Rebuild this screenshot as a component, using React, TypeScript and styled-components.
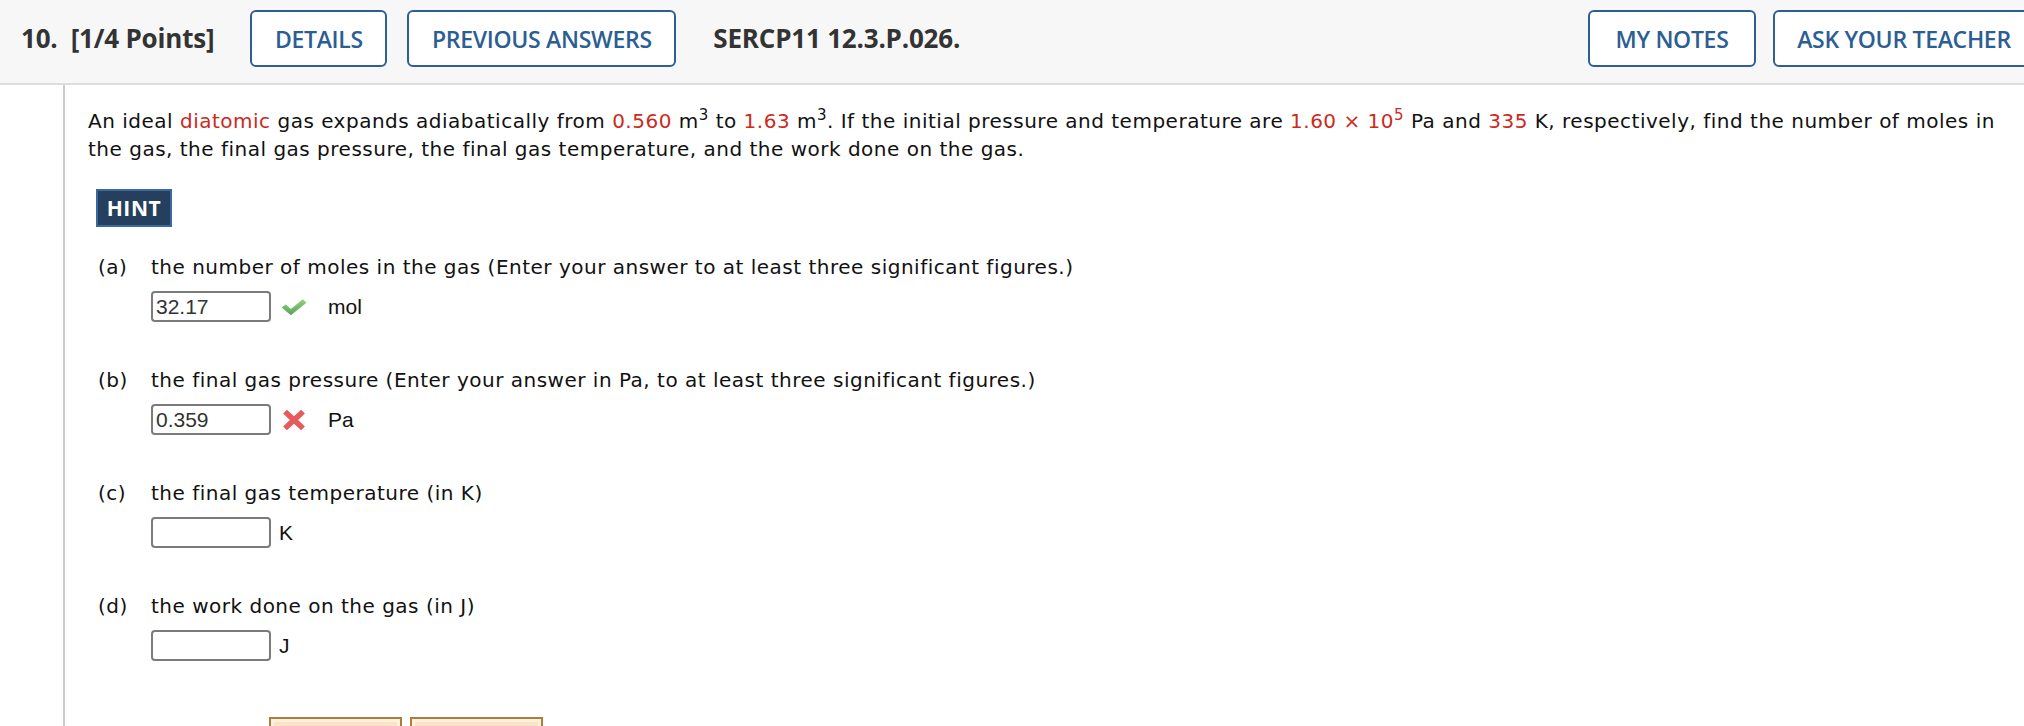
import React from 'react'
import styled, { createGlobalStyle } from 'styled-components'

const GlobalStyle = createGlobalStyle`
  html, body {
    margin: 0;
    padding: 0;
    background: #fff;
    overflow: hidden;
  }
  body {
    width: 2024px;
    height: 726px;
  }
`

const Page = styled.div`
  width: 2024px;
  height: 726px;
  overflow: hidden;
  display: flex;
  flex-direction: column;
`

const Header = styled.div`
  height: 85px;
  flex-shrink: 0;
  background: #f7f7f7;
  border-bottom: 2px solid #dedede;
  display: flex;
  align-items: flex-start;
  padding: 10px 0 0 21px;
  box-sizing: border-box;
  white-space: nowrap;
`

const Title = styled.div<{ ml?: number; mr?: number }>`
  font-family: 'Open Sans', sans-serif;
  font-weight: 700;
  font-size: 26px;
  color: #333;
  height: 57px;
  line-height: 57px;
  margin-left: ${(p) => p.ml ?? 0}px;
  margin-right: ${(p) => p.mr ?? 0}px;
  letter-spacing: -0.2px;
`

const HeaderButton = styled.button<{ w: number; ml?: number; mr?: number }>`
  flex-shrink: 0;
  width: ${(p) => p.w}px;
  height: 57px;
  margin-left: ${(p) => p.ml ?? 0}px;
  margin-right: ${(p) => p.mr ?? 0}px;
  border: 2px solid #2d5f93;
  border-radius: 6px;
  background: #fff;
  color: #2b5e92;
  font-family: 'Open Sans', sans-serif;
  font-weight: 600;
  font-size: 23px;
  letter-spacing: -0.3px;
  padding: 0;
  cursor: pointer;
`

const Spacer = styled.div`
  flex: 1;
`

const Body = styled.div`
  flex: 1;
  margin-left: 63px;
  border-left: 2px solid #cccccc;
  padding: 22px 0 0 23px;
  font-family: 'DejaVu Sans', Verdana, sans-serif;
  color: #111;
`

const Question = styled.p`
  margin: 0;
  font-size: 20px;
  line-height: 28px;
  width: 1925px;
  letter-spacing: 0.5px;
`

const Red = styled.span`
  color: #cc2a20;
`

const Sup = styled.sup`
  font-size: 15px;
  line-height: 0;
  vertical-align: 8px;
`

const HintButton = styled.button`
  display: block;
  margin: 26px 0 0 8px;
  width: 76px;
  height: 38px;
  padding: 0;
  background: #253f5e;
  border: 2px solid #3a68a0;
  color: #fff;
  font-family: 'Open Sans', sans-serif;
  font-weight: 700;
  font-size: 21px;
  letter-spacing: 0.6px;
`

const Part = styled.div<{ first?: boolean }>`
  margin-top: ${(p) => (p.first ? 26 : 44)}px;
  padding-left: 10px;
`

const PartLabel = styled.div`
  display: flex;
  font-size: 20px;
  line-height: 28px;
  letter-spacing: 0.5px;
  white-space: nowrap;
`

const Letter = styled.span`
  width: 53px;
  flex-shrink: 0;
`

const AnswerRow = styled.div`
  display: flex;
  align-items: center;
  margin: 10px 0 0 53px;
  height: 31px;
`

const AnswerBox = styled.div`
  width: 120px;
  height: 31px;
  box-sizing: border-box;
  border: 2px solid #7b7b7b;
  border-radius: 4px;
  background: #fff;
  font-family: 'Liberation Sans', Arial, sans-serif;
  font-size: 21px;
  color: #333;
  line-height: 27px;
  padding-left: 3px;
`

const Mark = styled.span`
  display: flex;
  width: 28px;
  margin-left: 9px;
  justify-content: center;
`

const Unit = styled.span<{ ml: number }>`
  margin-left: ${(p) => p.ml}px;
  font-family: 'Liberation Sans', Arial, sans-serif;
  font-size: 21px;
  color: #111;
`

const Footer = styled.div`
  display: flex;
  align-items: flex-start;
  margin-top: 56px;
  padding-left: 12px;
`

const HelpText = styled.span`
  width: 169px;
  margin-top: 6px;
  color: #f0b070;
  font-size: 18px;
  font-weight: 700;
  opacity: 0.7;
`

const SubmitButton = styled.button`
  width: 133px;
  height: 36px;
  margin-right: 8px;
  padding: 0;
  background: #fde3c6;
  border: 2px solid #b07c3e;
  box-shadow: inset 0 0 0 3px #fff1e0;
`

const Check = () => (
  <svg width="28" height="21" viewBox="0 0 27 20">
    <defs>
      <linearGradient id="ck" x1="0" y1="0" x2="0" y2="1">
        <stop offset="0" stopColor="#95d184" />
        <stop offset="1" stopColor="#58a356" />
      </linearGradient>
    </defs>
    <path d="M1.5 11 L5.5 8 L10.5 12.5 L22 3 L25.5 6.5 L10.5 18.5 Z" fill="url(#ck)" />
  </svg>
)

const Cross = () => (
  <svg width="24" height="24" viewBox="0 0 22 22">
    <path
      d="M4.5 1.5 L11 7.5 L17.5 1.5 L21 5 L14.8 11 L21 17 L17.5 20.5 L11 14.5 L4.5 20.5 L1 17 L7.2 11 L1 5 Z"
      fill="#e65c5c"
    />
  </svg>
)

const parts = [
  {
    letter: '(a)',
    text: 'the number of moles in the gas (Enter your answer to at least three significant figures.)',
    value: '32.17',
    mark: 'ok',
    unit: 'mol',
  },
  {
    letter: '(b)',
    text: 'the final gas pressure (Enter your answer in Pa, to at least three significant figures.)',
    value: '0.359',
    mark: 'bad',
    unit: 'Pa',
  },
  { letter: '(c)', text: 'the final gas temperature (in K)', value: '', mark: '', unit: 'K' },
  { letter: '(d)', text: 'the work done on the gas (in J)', value: '', mark: '', unit: 'J' },
]

export default function App() {
  return (
    <>
      <GlobalStyle />
      <Page>
        <Header>
          <Title mr={36}>10.&nbsp; [1/4 Points]</Title>
          <HeaderButton w={137}>DETAILS</HeaderButton>
          <HeaderButton w={269} ml={20}>PREVIOUS ANSWERS</HeaderButton>
          <Title ml={37}>SERCP11 12.3.P.026.</Title>
          <Spacer />
          <HeaderButton w={168}>MY NOTES</HeaderButton>
          <HeaderButton w={262} ml={17} mr={-11}>ASK YOUR TEACHER</HeaderButton>
        </Header>
        <Body>
          <Question>
            An ideal <Red>diatomic</Red> gas expands adiabatically from <Red>0.560</Red> m<Sup>3</Sup> to{' '}
            <Red>1.63</Red> m<Sup>3</Sup>. If the initial pressure and temperature are{' '}
            <Red>
              1.60 × 10<Sup>5</Sup>
            </Red>{' '}
            Pa and <Red>335</Red> K, respectively, find the number of moles in the gas, the final gas pressure, the
            final gas temperature, and the work done on the gas.
          </Question>
          <HintButton>HINT</HintButton>
          {parts.map((p, i) => (
            <Part key={p.letter} first={i === 0}>
              <PartLabel>
                <Letter>{p.letter}</Letter>
                <span>{p.text}</span>
              </PartLabel>
              <AnswerRow>
                <AnswerBox>{p.value}</AnswerBox>
                {p.mark && <Mark>{p.mark === 'ok' ? <Check /> : <Cross />}</Mark>}
                <Unit ml={p.mark ? 20 : 8}>{p.unit}</Unit>
              </AnswerRow>
            </Part>
          ))}
          <Footer>
            <HelpText>Need Help?</HelpText>
            <SubmitButton />
            <SubmitButton />
          </Footer>
        </Body>
      </Page>
    </>
  )
}
